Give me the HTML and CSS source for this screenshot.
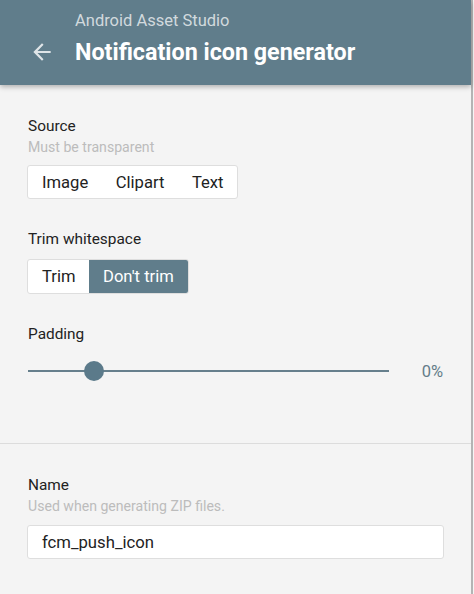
FILE: index.html
```html
<!DOCTYPE html>
<html>
<head>
<meta charset="utf-8">
<link rel="stylesheet" href="styles.css">
</head>
<body>
<div class="page">
  <header class="appbar">
    <div class="appbar-sub">Android Asset Studio</div>
    <div class="appbar-row">
      <svg class="back" viewBox="0 0 24 24" width="26" height="26"><path d="M20 11H7.83l5.59-5.59L12 4l-8 8 8 8 1.41-1.41L7.83 13H20v-2z" fill="currentColor"/></svg>
      <h1 class="appbar-title">Notification icon generator</h1>
    </div>
  </header>
  <main class="panel">
    <section class="group first">
      <div class="field">
        <div class="label">Source</div>
        <div class="help">Must be transparent</div>
        <div class="seg">
          <span class="seg-item">Image</span>
          <span class="seg-item">Clipart</span>
          <span class="seg-item">Text</span>
        </div>
      </div>
      <div class="field">
        <div class="label">Trim whitespace</div>
        <div class="seg tall">
          <span class="seg-item">Trim</span>
          <span class="seg-item active">Don't trim</span>
        </div>
      </div>
      <div class="field">
        <div class="label">Padding</div>
        <div class="slider-row">
          <div class="slider">
            <div class="track"></div>
            <div class="thumb"></div>
          </div>
          <div class="slider-val">0%</div>
        </div>
      </div>
    </section>
    <section class="group second">
      <div class="field">
        <div class="label">Name</div>
        <div class="help">Used when generating ZIP files.</div>
        <div class="input">fcm_push_icon</div>
      </div>
    </section>
  </main>
</div>
</body>
</html>
```

FILE: styles.css
```css
* { box-sizing: border-box; }
html, body { margin: 0; padding: 0; }
body {
  font-family: Roboto, "Liberation Sans", sans-serif;
  background: #f5f5f5;
  width: 474px;
  height: 594px;
  overflow: hidden;
}
.page {
  width: 473px;
  height: 594px;
  border-right: 2px solid #b4b4b4;
  background: #f4f4f4;
  position: relative;
}
.appbar {
  height: 85px;
  background: #607d8b;
  color: #fff;
  padding: 10px 0 0 0;
  box-shadow: 0 2px 5px rgba(0,0,0,0.28);
  position: relative;
  z-index: 1;
}
.appbar-sub {
  padding-left: 75px;
  font-size: 16.5px;
  line-height: 22px;
  color: rgba(255,255,255,0.72);
}
.appbar-row {
  display: flex;
  align-items: center;
  height: 36px;
  margin-top: 2px;
}
.back {
  color: rgba(255,255,255,0.8);
  margin-left: 29px;
  margin-right: 20px;
}
.appbar-title {
  margin: 0;
  font-size: 23.3px;
  font-weight: 700;
  line-height: 30px;
}
.panel { padding: 0; }
.group { padding: 0 28px 0 28px; }
.group.first {
  padding-top: 31px;
  height: 359px;
  border-bottom: 1px solid #dcdcdc;
}
.group.second { padding-top: 31px; }
.field { margin-bottom: 30px; }
.label {
  font-size: 15.4px;
  line-height: 20px;
  color: #222;
}
.help {
  font-size: 14.1px;
  line-height: 18px;
  color: #bcbcbc;
  margin-top: 2px;
}
.seg {
  display: inline-flex;
  margin-top: 9px;
  margin-left: -1px;
  background: #fff;
  border: 1px solid #dedede;
  border-radius: 3px;
  overflow: hidden;
  height: 34px;
}
.seg.tall { height: 35px; margin-top: 10px; }
.seg-item {
  display: flex;
  align-items: center;
  padding: 0 13.5px 0 14px;
  font-size: 16.6px;
  color: #222;
}
.seg-item.active {
  background: #607d8b;
  color: #fff;
  padding: 0 14px 0 14px;
}
.slider-row {
  display: flex;
  align-items: center;
  height: 24px;
  margin-top: 15px;
}
.slider {
  position: relative;
  width: 361px;
  height: 24px;
}
.track {
  position: absolute;
  left: 0; right: 0;
  top: 11px;
  height: 2px;
  background: #667f8c;
}
.thumb {
  position: absolute;
  left: 56px;
  top: 2px;
  width: 20px;
  height: 20px;
  border-radius: 50%;
  background: #5b7a8a;
}
.slider-val {
  margin-left: 33px;
  font-size: 16.5px;
  color: #647d89;
}
.input {
  margin-top: 10px;
  margin-left: -1px;
  width: 417px;
  height: 34px;
  background: #fff;
  border: 1px solid #dedede;
  border-radius: 3px;
  display: flex;
  align-items: center;
  padding-left: 14px;
  font-size: 16.7px;
  color: #222;
}
```
